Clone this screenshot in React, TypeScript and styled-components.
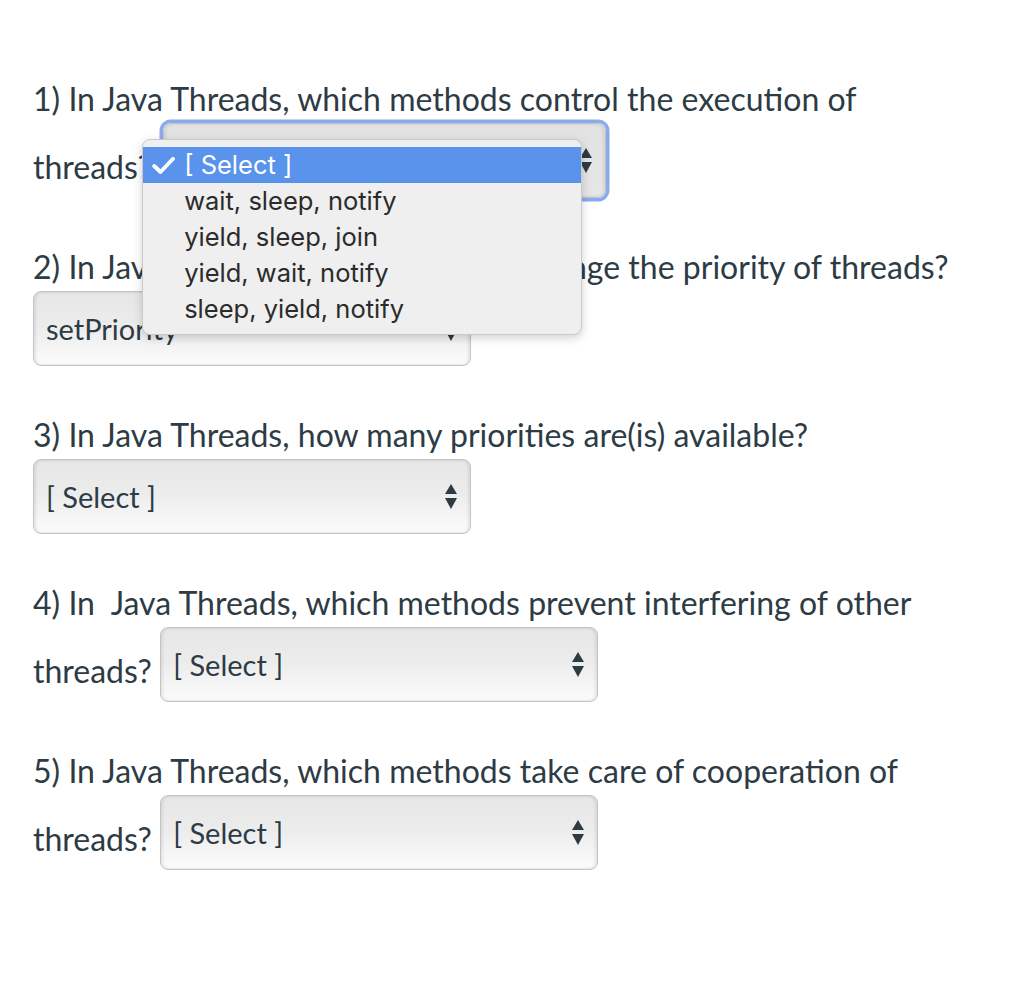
import { FunctionComponent, ReactNode } from "react";
import styled, { createGlobalStyle, css } from "styled-components";

const GlobalStyle = createGlobalStyle`
  html, body {
    margin: 0;
    padding: 0;
    background: #ffffff;
  }
  body {
    font-family: Lato, "Open Sans", sans-serif;
    color: #2d3b45;
  }
`;

interface ISelectProps {
  value: string;
  focused?: boolean;
  width?: number;
  children?: ReactNode;
}

const Arrows = () => (
  <svg width="12" height="25" viewBox="0 0 12 25">
    <polygon points="0,10 6,0 12,10" fill="#2d3b45" />
    <polygon points="0,14 12,14 6,25" fill="#2d3b45" />
  </svg>
);

const Check = () => (
  <svg width="23" height="17" viewBox="0 0 23 17">
    <path
      d="M2.2 9 L8.5 15 L21 1.8"
      fill="none"
      stroke="#ffffff"
      strokeWidth="3.8"
      strokeLinecap="round"
      strokeLinejoin="round"
    />
  </svg>
);

const FakeSelect: FunctionComponent<ISelectProps> = ({ value, focused, width = 438, children }) => {
  return (
    <SelectBox $focused={focused} $width={width}>
      <SelectValue>{value}</SelectValue>
      <Arrows />
      {children}
    </SelectBox>
  );
};

const options = [
  "[ Select ]",
  "wait, sleep, notify",
  "yield, sleep, join",
  "yield, wait, notify",
  "sleep, yield, notify",
];

const App = () => {
  return (
    <>
      <GlobalStyle />
      <Page>
        <Question>
          1) In Java Threads, which methods control the execution of threads?{" "}
          <FakeSelect value="[ Select ]" focused width={443}>
            <Menu>
              {options.map((opt, i) => (
                <MenuRow key={opt} $active={i === 0}>
                  <CheckSlot>{i === 0 && <Check />}</CheckSlot>
                  {opt}
                </MenuRow>
              ))}
            </Menu>
          </FakeSelect>
        </Question>
        <Question>
          2) In Java Threads, which methods change the priority of threads?{" "}
          <FakeSelect value="setPriority" />
        </Question>
        <Question>
          3) In Java Threads, how many priorities are(is) available?{" "}
          <FakeSelect value="[ Select ]" />
        </Question>
        <Question>
          4) In{"\u00a0\u00a0"}Java Threads, which methods prevent interfering of other threads?{" "}
          <FakeSelect value="[ Select ]" />
        </Question>
        <Question>
          5) In Java Threads, which methods take care of cooperation of threads?{" "}
          <FakeSelect value="[ Select ]" />
        </Question>
      </Page>
    </>
  );
};

export default App;

const Page = styled.div`
  padding: 78px 33px 40px 33px;
  box-sizing: border-box;
  width: 1010px;
`;

const Question = styled.p`
  margin: 0 0 48px 0;
  font-size: 32px;
  word-spacing: 0.1px;
  line-height: 42px;
  color: #2d3b45;
`;

const SelectBox = styled.span<{ $focused?: boolean; $width: number }>`
  position: relative;
  display: inline-flex;
  align-items: center;
  justify-content: space-between;
  box-sizing: border-box;
  width: ${({ $width }) => $width}px;
  height: 75px;
  margin-top: 3px;
  padding: 0 13px 0 12px;
  vertical-align: 7px;
  word-spacing: normal;
  border: 1.5px solid #c4c4c4;
  border-radius: 8px;
  background: linear-gradient(#e6e6e6 0%, #ececec 45%, #fbfbfb 100%);
  box-shadow: inset 2px 0 3px rgba(0, 0, 0, 0.08), inset -2px 0 3px rgba(0, 0, 0, 0.08);
  ${({ $focused }) =>
    $focused &&
    css`
      margin-left: 3px;
      box-shadow: 0 0 0 3.5px #88abef, inset 2px 0 3px rgba(0, 0, 0, 0.08),
        inset -2px 0 3px rgba(0, 0, 0, 0.08);
      background: linear-gradient(#e2e2e2 0%, #e6e6e6 100%);
    `}
`;

const SelectValue = styled.span`
  font-family: Lato, sans-serif;
  font-size: 29px;
  line-height: 1;
  color: #2d3b45;
`;

const Menu = styled.div`
  position: absolute;
  z-index: 10;
  left: -22px;
  top: 15px;
  width: 440px;
  box-sizing: border-box;
  padding: 7px 0 7px 0;
  background: #efefef;
  border: 1px solid #c9c9c9;
  border-radius: 8px;
  box-shadow: 0 3px 10px rgba(0, 0, 0, 0.18);
`;

const MenuRow = styled.div<{ $active?: boolean }>`
  display: flex;
  align-items: center;
  height: 36px;
  font-family: Inter, "Liberation Sans", sans-serif;
  font-size: 25.5px;
  color: ${({ $active }) => ($active ? "#ffffff" : "#2b2b2b")};
  background: ${({ $active }) => ($active ? "#5a93ec" : "transparent")};
`;

const CheckSlot = styled.span`
  display: flex;
  align-items: center;
  width: 32px;
  padding-left: 9px;
  flex-shrink: 0;
`;
